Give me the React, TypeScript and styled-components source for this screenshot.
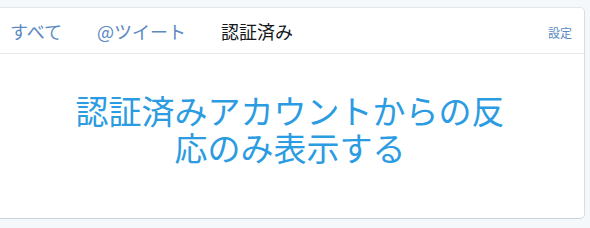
import React from 'react';
import styled, { createGlobalStyle } from 'styled-components';

const GlobalStyle = createGlobalStyle`
  html, body {
    margin: 0;
    padding: 0;
    background-color: #f5f8fa;
    font-family: "Noto Sans CJK JP", "Noto Sans", sans-serif;
  }
`;

const Page = styled.div`
  width: 590px;
  height: 228px;
  padding-top: 7px;
  box-sizing: border-box;
  overflow: hidden;
`;

const Card = styled.div`
  margin-left: -5px;
  width: 590px;
  height: 212px;
  box-sizing: border-box;
  background-color: #ffffff;
  border: 1px solid #e1e8ed;
  border-bottom-color: #c5d3dc;
  border-right-color: #d3dee6;
  border-radius: 5px;
  display: flex;
  flex-direction: column;
`;

const TabBar = styled.div`
  height: 45px;
  display: flex;
  align-items: center;
  padding: 0 11px 0 14px;
  border-bottom: 1px solid #e6ecf0;
`;

const Tab = styled.div<{ $active?: boolean }>`
  font-size: 18px;
  line-height: 1;
  margin-right: 35px;
  color: ${(props) => (props.$active ? '#14171a' : '#5b8ac2')};
  cursor: pointer;
`;

const Settings = styled.div`
  margin-left: auto;
  margin-right: 1px;
  font-size: 12px;
  color: #5b8ac2;
  padding-top: 3px;
`;

const Body = styled.div`
  flex: 1;
  display: flex;
  justify-content: center;
  padding-top: 38px;
`;

const Message = styled.div`
  width: 440px;
  text-align: center;
  font-size: 33px;
  line-height: 37px;
  color: #2b9be2;
`;

const App = () => {
  return (
    <>
      <GlobalStyle />
      <Page>
        <Card>
          <TabBar>
            <Tab>すべて</Tab>
            <Tab>@ツイート</Tab>
            <Tab $active>認証済み</Tab>
            <Settings>設定</Settings>
          </TabBar>
          <Body>
            <Message>認証済みアカウントからの反応のみ表示する</Message>
          </Body>
        </Card>
      </Page>
    </>
  );
};

export default App;
